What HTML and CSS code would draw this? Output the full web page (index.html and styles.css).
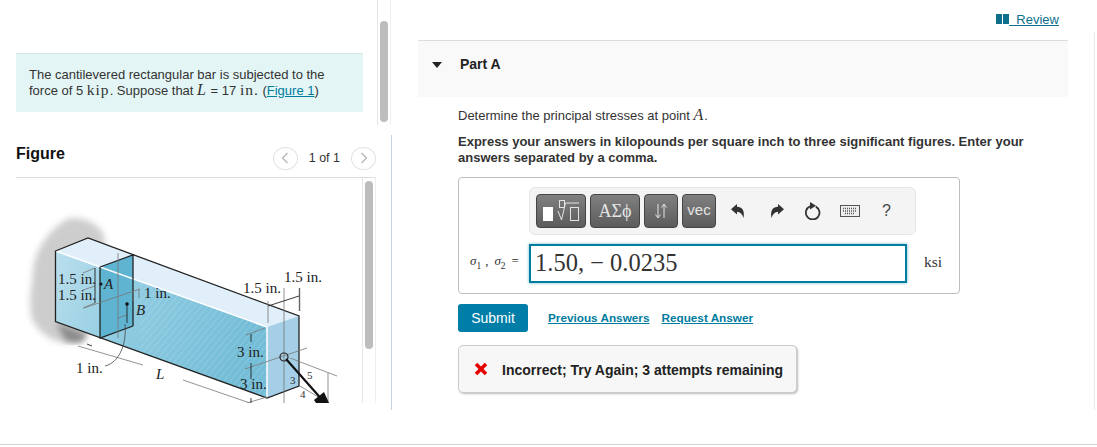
FILE: index.html
```html
<!DOCTYPE html>
<html lang="en">
<head>
<meta charset="utf-8">
<title>Part A</title>
<link rel="stylesheet" href="styles.css">
</head>
<body>
<div class="page">
  <div class="left">
    <section class="top-pane">
      <div class="top-content">
        <p class="note">The cantilevered rectangular bar is subjected to the force of 5 <span class="rm">kip</span>. Suppose that <span class="it">L</span> = 17 <span class="rm">in.</span> (<a href="#">Figure 1</a>)</p>
      </div>
      <div class="track top-track"><div class="thumb top-thumb"></div></div>
    </section>
    <section class="fig-pane">
      <header class="fig-head">
        <h2>Figure</h2>
        <div class="pager">
          <span class="round"><svg width="8" height="12" viewBox="0 0 8 12"><path class="chev" d="M6.500 1 1.500 6l5 5"/></svg></span>
          <span class="count">1 of 1</span>
          <span class="round"><svg width="8" height="12" viewBox="0 0 8 12"><path class="chev" d="M1.500 1l5 5-5 5"/></svg></span>
        </div>
      </header>
      <div class="fig-body">
        <svg class="figure" width="346" height="225" viewBox="16 177 346 225">
          <defs>
            <linearGradient id="front" x1="0" y1="0" x2="1" y2="0.3">
              <stop offset="0" stop-color="#bbdfed"/>
              <stop offset="0.45" stop-color="#8ecbe1"/>
              <stop offset="1" stop-color="#74bdd7"/>
            </linearGradient>
            <pattern id="hatch" width="5" height="5" patternUnits="userSpaceOnUse" patternTransform="rotate(40)">
              <rect class="hatch-line" width="1" height="5"/>
            </pattern>
            <filter id="soft"><feGaussianBlur stdDeviation="3"/></filter>
          </defs>
          <path class="wall" d="M70 217C84 216 98 222 104 234L110 300 84 336C78 342 68 344 58 340 48 338 38 330 32 318 28 300 32 285 33 270 34 250 50 226 70 217Z"/>
          <path class="wall-dark" d="M56 322 88 334 80 342 66 340Z"/>
          <path class="top-face" d="M55.500 250 88 237 299 315 267 326Z"/>
          <path class="front-face" d="M55.500 250 267 326V397L55.500 320.500Z"/>
          <path class="hatch-face" d="M140 281 267 326V397L140 351Z"/>
          <path class="end-face" d="M267 326 299 315V385L267 397Z"/>
          <path class="section" d="M100 266 133 254V325L100 337Z"/>
          <path class="highlight" d="M55.500 250 267 326V397"/>
          <path class="edge" d="M55.500 250 88 237 299 315V385L267 397 55.500 320.500ZM100 266V337L133 325M100 266 133 254V325"/>
          <path class="thin" d="M118 252V337M84 307 140 288M83 272 95 267M83 289 95 285M83 307 95 302M139 288V297M133 290V300M118 317 127 314M78 345 143 364M183 379 250 402M268 300V322M284 287V402M246 334 265 327M245 368 307 347M290 357 337 375M328 372V402M300 385 325 400M247 402 267 396"/>
          <path class="thick-gray" d="M299.500 287V310"/>
          <path class="dim" d="M95 267V302M251 333V341M251 362V378M251 397V402M268 305 299 295M127 303V322M87 343 92 345"/>
          <path class="curve" d="M105 365C118 362 127 345 125 323"/>
          <circle class="pt" cx="101" cy="283" r="1.500"/>
          <circle class="pt" cx="127" cy="303" r="1.800"/>
          <circle class="ring" cx="284" cy="356" r="4"/>
          <path class="force" d="M286 358 325 402"/>
          <path class="head" d="M314 399 324 391 329 402H316Z"/>
          <text class="lbl" x="58" y="283">1.5 in.</text>
          <text class="lbl" x="58" y="299">1.5 in.</text>
          <text class="lbl ital" x="104" y="288">A</text>
          <text class="lbl" x="144" y="297">1 in.</text>
          <text class="lbl ital" x="136" y="314">B</text>
          <text class="lbl" x="76" y="372">1 in.</text>
          <text class="lbl ital" x="156" y="378">L</text>
          <text class="lbl" x="243" y="292">1.5 in.</text>
          <text class="lbl" x="284" y="281">1.5 in.</text>
          <text class="lbl" x="237" y="356">3 in.</text>
          <text class="lbl" x="240" y="388">3 in.</text>
          <text class="small" x="290" y="383">3</text>
          <text class="small" x="307" y="378">5</text>
          <text class="small" x="300" y="397">4</text>
        </svg>
        <div class="track fig-track"><div class="thumb fig-thumb"></div></div>
      </div>
    </section>
  </div>
  <div class="divider"></div>
  <main class="right">
    <div class="review-row">
      <a class="review" href="#"><svg width="13" height="10" viewBox="0 0 13 10"><path class="book" d="M0 0H6V10H0ZM7 0H13V10H7Z"/></svg>  Review</a>
    </div>
    <div class="part-band">
      <svg class="caret" width="10" height="6" viewBox="0 0 10 6"><path d="M0 0H10L5 6Z"/></svg>
      <h3>Part A</h3>
    </div>
    <div class="part-body">
      <p class="prompt">Determine the principal stresses at point <span class="it big">A</span>.</p>
      <p class="instr">Express your answers in kilopounds per square inch to three significant figures. Enter your answers separated by a comma.</p>
      <div class="answer">
        <div class="toolbar">
          <span class="btn b-wide">
            <svg width="36" height="24" viewBox="0 0 36 24"><rect class="fill-w" x="0" y="8" width="10" height="14"/><rect class="out" x="16.500" y="1.500" width="5" height="7"/><path class="out" d="M15 12l3.500 9 4-17H36"/><rect class="out" x="27.500" y="8.500" width="8" height="13"/></svg>
          </span>
          <span class="btn b-wide serif">ΑΣϕ</span>
          <span class="btn b-mid"><svg width="16" height="16" viewBox="0 0 16 16"><path class="out" d="M5 1V14M2.500 11.500 5 15 7.500 11.500M11 15V2M8.500 4.500 11 1 13.500 4.500"/></svg></span>
          <span class="btn b-mid vec">vec</span>
          <span class="tools">
            <svg class="t1" width="14" height="14" viewBox="0 0 14 14"><path class="ico" d="M0 5.300 6 0V2.700C11 3 14 6 12.500 14 11.500 10 9 8 6 7.700V10.500Z"/></svg>
            <svg class="t2" width="14" height="14" viewBox="0 0 14 14"><path class="ico" d="M14 5.300 8 0V2.700C3 3 0 6 1.500 14 2.500 10 5 8 8 7.700V10.500Z"/></svg>
            <svg class="t3" width="18" height="18" viewBox="0 0 18 18"><path class="reset" d="M11.800 4.600A6.800 6.800 0 1 1 6 4.400"/><path class="ico" d="M6 0 12 3.800 6 7.500Z"/></svg>
            <svg class="t4" width="20" height="12" viewBox="0 0 20 12"><rect class="key" x="0.500" y="0.500" width="19" height="11"/><path class="keys" d="M3 3.500H17M3 6H17M5 8.500H15"/></svg>
            <span class="help">?</span>
          </span>
        </div>
        <div class="entry">
          <span class="sym"><i>σ</i><sub>1</sub><span class="comma">,</span><i>σ</i><sub>2</sub><span class="eq">=</span></span>
          <div class="field">1.50, − 0.0235</div>
          <span class="unit">ksi</span>
        </div>
      </div>
      <div class="actions">
        <button class="submit" type="button">Submit</button>
        <a href="#">Previous Answers</a>
        <a href="#">Request Answer</a>
      </div>
      <div class="feedback">
        <svg width="14" height="14" viewBox="0 0 14 14"><path class="x" d="M2 2 12 12M12 2 2 12"/></svg>
        <span>Incorrect; Try Again; 3 attempts remaining</span>
      </div>
    </div>
  </main>
  <div class="edge-line"></div>
</div>
<div class="foot"></div>
</body>
</html>
```
FILE: styles.css
```css
* { box-sizing: border-box; }
html, body { margin: 0; padding: 0; }
body { font-family: "Liberation Sans", Arial, sans-serif; color: #333; background: #fff; width: 1097px; height: 447px; overflow: hidden; }
a { color: #007c9e; }
p, h2, h3 { margin: 0; }

.page { display: flex; height: 444px; align-items: flex-start; }
.left { width: 391px; height: 410px; flex: none; }

.top-pane { display: flex; height: 125px; }
.top-content { width: 377px; padding: 53px 0 0 16px; }
.note { width: 347px; height: 59px; background: #e3f6f5; border-top: 1px solid #d3e3e6; padding: 13px 20px 0 13px; font-size: 13px; line-height: 16px; }
.rm { font-family: "Liberation Serif", serif; font-size: 15.500px; line-height: 14px; letter-spacing: 1px; }
.it { font-family: "Liberation Serif", serif; font-style: italic; font-size: 16px; line-height: 14px; margin-right: 1px; }
.big { font-size: 16px; }

.track { flex: none; width: 14px; border-left: 1px solid #e6e6e6; border-right: 1px solid #eee; padding: 0 2px; }
.thumb { width: 8px; background: #bdbdbd; border-radius: 4px; }
.top-track { height: 125px; padding-top: 21px; }
.top-thumb { height: 101px; }
.fig-track { height: 225px; padding-top: 3px; }
.fig-thumb { height: 168px; }

.fig-pane { padding-left: 16px; width: 376px; }
.fig-head { display: flex; justify-content: space-between; height: 53px; border-bottom: 1px solid #ddd; }
.fig-head h2 { font-size: 16px; line-height: 18px; color: #111; padding-top: 20px; }
.pager { display: flex; align-items: center; gap: 11px; padding-top: 17px; height: 49px; }
.round { width: 25px; height: 23px; border: 1px solid #e2e2e2; border-radius: 50%; display: flex; align-items: center; justify-content: center; }
.chev { fill: none; stroke: #b5b5b5; stroke-width: 1.300; }
.count { font-size: 12.500px; color: #333; }
.fig-body { display: flex; }
.figure { display: block; flex: none; }

.wall { fill: #cdcdcd; filter: url(#soft); }
.wall-dark { fill: #8a8a8a; filter: url(#soft); }
.top-face { fill: #e0effa; }
.front-face { fill: url(#front); }
.hatch-face { fill: url(#hatch); }
.hatch-line { fill: #fff; opacity: 0.14; }
.end-face { fill: #a4cfe6; }
.section { fill: #5fb4d2; }
.highlight { fill: none; stroke: #fff; stroke-width: 1.500; }
.edge { fill: none; stroke: #222; stroke-width: 1.300; }
.thin { fill: none; stroke: #777; stroke-width: 0.800; }
.thick-gray { fill: none; stroke: #666; stroke-width: 1.400; }
.dim { fill: none; stroke: #222; stroke-width: 0.900; }
.curve { fill: none; stroke: #444; stroke-width: 0.800; }
.pt { fill: #111; }
.ring { fill: none; stroke: #222; stroke-width: 1.200; }
.force { stroke: #111; stroke-width: 2.200; fill: none; }
.head { fill: #111; }
.lbl { font-family: "Liberation Serif", serif; font-size: 15px; fill: #222; }
.ital { font-style: italic; }
.small { font-family: "Liberation Serif", serif; font-size: 11px; fill: #333; }

.divider { flex: none; width: 1px; height: 275px; margin-top: 135px; background: #c3d4e4; }

.right { width: 677px; flex: none; padding-left: 26px; }
.edge-line { flex: none; width: 1px; height: 378px; margin: 32px 0 0 25px; background: #e9e9e9; }
.review-row { height: 41px; border-bottom: 1px solid #ddd; width: 650px; display: flex; justify-content: flex-end; padding: 12px 9px 0 0; }
.review { font-size: 13px; line-height: 15px; color: #0d6f8c; white-space: pre; }
.book { fill: #0d6f8c; }
.part-band { width: 650px; height: 56px; background: #f9f9f9; display: flex; align-items: flex-start; padding: 16px 0 0 14px; }
.caret { margin-top: 5px; fill: #222; flex: none; }
.part-band h3 { font-size: 14px; line-height: 14px; color: #222; margin-left: 18px; }

.part-body { padding-left: 40px; width: 650px; }
.prompt { font-size: 13px; line-height: 16px; padding-top: 11px; }
.instr { font-size: 13px; font-weight: 700; line-height: 16px; margin-top: 10px; width: 590px; }

.answer { width: 502px; height: 117px; margin-top: 11px; border: 1px solid #bdbdbd; border-radius: 4px; padding: 9px 0 0 70px; }
.toolbar { width: 387px; height: 48px; background: #f4f4f4; border: 1px solid #e6e6e6; border-radius: 6px; display: flex; align-items: center; gap: 4px; padding-left: 6px; }
.btn { height: 34px; border: 1px solid #444; border-radius: 4px; background: linear-gradient(#808080, #5c5c5c); color: #e4e4e4; display: flex; align-items: center; justify-content: center; flex: none; }
.b-wide { width: 50px; }
.b-mid { width: 34px; }
.serif { font-family: "Liberation Serif", serif; font-size: 18px; }
.vec { font-size: 15px; padding-bottom: 3px; }
.fill-w { fill: #fff; }
.out { fill: none; stroke: #e4e4e4; stroke-width: 1; }
.tools { display: flex; align-items: center; margin-left: 11px; }
.t2 { margin-left: 25px; }
.t3 { margin-left: 20px; }
.t4 { margin-left: 18px; }
.ico { fill: #333; }
.reset { fill: none; stroke: #333; stroke-width: 1.800; }
.key { fill: #eee; stroke: #555; }
.keys { fill: none; stroke: #555; stroke-width: 1.300; stroke-dasharray: 1 1; }
.help { font-size: 16px; color: #444; margin-left: 22px; }

.entry { display: flex; align-items: center; margin: 9px 0 0 -59px; }
.sym { font-family: "Liberation Serif", serif; font-size: 13px; width: 59px; white-space: nowrap; color: #333; padding-bottom: 3px; }
.sym sub { font-size: 9.500px; }
.comma { margin: 0 6px 0 4px; }
.eq { margin-left: 6px; }
.field { width: 378px; height: 39px; border: 2px solid #007c9e; box-shadow: 0 0 3px #6fb9cf; background: #fff; font-family: "Liberation Serif", serif; font-size: 24.500px; line-height: 33px; padding-left: 4px; color: #333; }
.unit { font-family: "Liberation Serif", serif; font-size: 15.500px; margin-left: 17px; padding-bottom: 3px; }

.actions { display: flex; align-items: center; margin-top: 10px; font-size: 11.750px; font-weight: 700; }
.submit { width: 70px; height: 28px; border: 0; border-radius: 3px; background: #007ea8; color: #fff; font: 14px "Liberation Sans", Arial, sans-serif; margin-right: 20px; padding: 0; }
.actions a { margin-right: 12px; padding-bottom: 2px; }

.feedback { width: 339px; height: 48px; margin-top: 13px; background: #f7f7f7; border: 1px solid #ccc; border-radius: 5px; box-shadow: 1px 1px 2px #bbb; display: flex; align-items: center; padding-left: 15px; font-size: 14px; font-weight: 700; color: #222; gap: 14px; }
.feedback span { padding-top: 1px; }
.x { stroke: #e60000; stroke-width: 3.500; fill: none; }

.foot { height: 1px; background: #cdd3d8; }
```
